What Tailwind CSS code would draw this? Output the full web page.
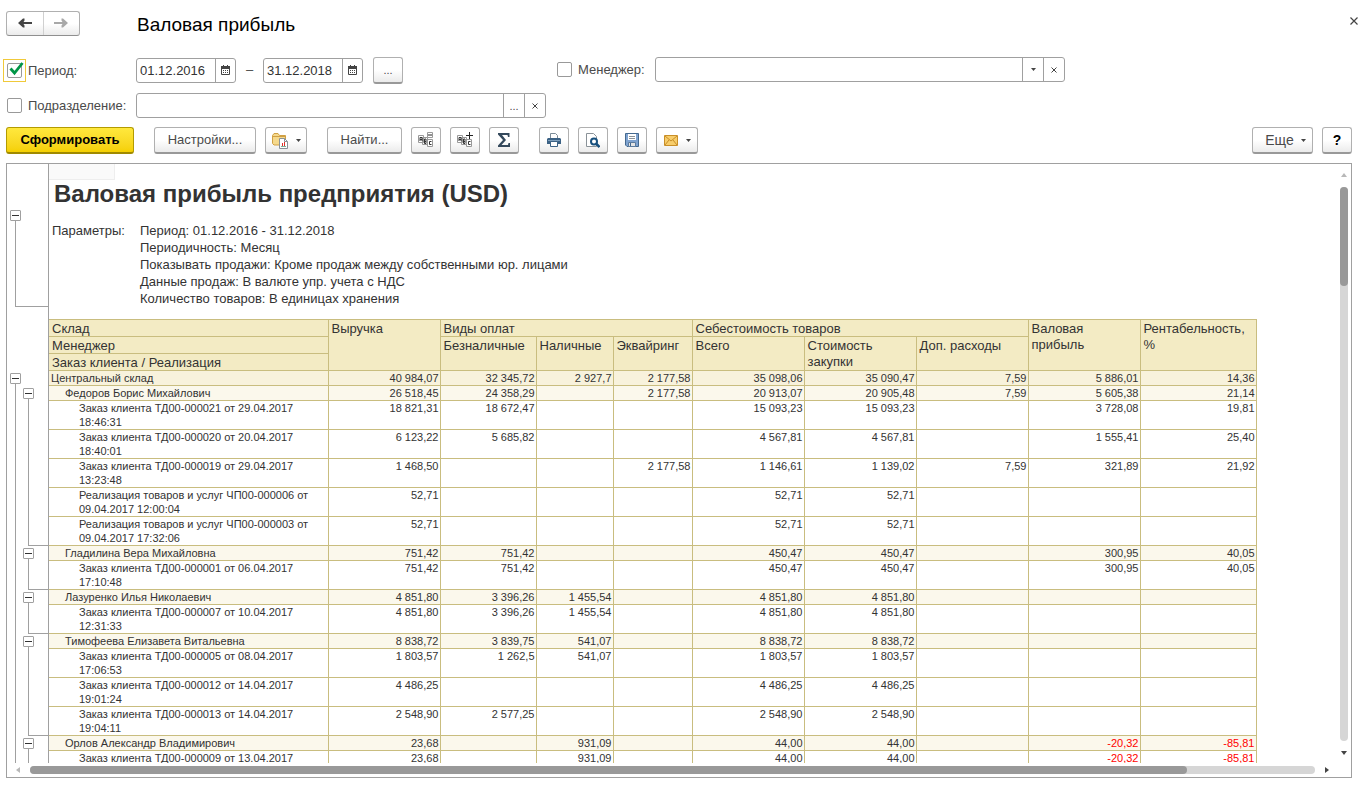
<!DOCTYPE html>
<html lang="ru">
<head>
    <meta charset="UTF-8">
    <meta name="viewport" content="width=device-width, initial-scale=1.0">
    <title>Валовая прибыль</title>
    <script src="https://cdn.jsdelivr.net/npm/@tailwindcss/browser@4"></script>
</head>
<body class="bg-white font-['Liberation_Sans',Arial,sans-serif] text-[13px] leading-4 text-[#4a4a4a] flex flex-col h-screen overflow-hidden">

<!-- Title bar -->
<header class="flex items-center h-[46px] pl-[6px] shrink-0">
    <div class="flex h-[25px] w-[74px] rounded-[3px] border border-[#b0b0b0] border-b-[#8f8f8f] bg-linear-to-b from-white from-50% to-[#ebebeb]">
        <button class="flex-1 flex items-center justify-center border-r border-[#d0d0d0]" aria-label="Назад">
            <svg width="14" height="10" viewBox="0 0 14 10"><path d="M0 5L5 .5h1.500v2L5.500 4H14v2H5.500l1 1.500v2H5z" fill="#444"/></svg>
        </button>
        <button class="flex-1 flex items-center justify-center" aria-label="Вперед">
            <svg width="14" height="10" viewBox="0 0 14 10"><path d="M14 5L9 .5H7.500v2L8.500 4H0v2h8.500l-1 1.500v2H9z" fill="#a8a8a8"/></svg>
        </button>
    </div>
    <h1 class="ml-[57px] pt-[3px] text-[19px] leading-6 text-black">Валовая прибыль</h1>
    <button class="ml-auto w-2 h-2 mb-1" aria-label="Закрыть">
        <svg width="8" height="8" viewBox="0 0 8 8" stroke="#444" stroke-width="1.200"><path d="M.5.5l7 7M7.500.5l-7 7"/></svg>
    </button>
</header>

<!-- Filters -->
<section class="grid grid-cols-[550px_1fr] gap-y-2 pl-[4px] pt-[10px] shrink-0">
    <div class="flex items-center h-7">
        <div class="flex items-center w-[132px]">
            <label class="relative flex w-[23px] h-[23px] -ml-px items-center justify-center border border-[#f0c93a]">
                <input type="checkbox" checked aria-label="Период" class="appearance-none w-[15px] h-[15px] rounded-[2px] border border-[#999] bg-white">
                <svg class="absolute left-1 top-0" width="17" height="17" viewBox="0 0 17 17" fill="none" stroke="#009646" stroke-width="2.800"><path d="M2.500 8.500l4 4.500L14.500 3"/></svg>
            </label>
            <span class="ml-[2px] pt-[2px]">Период:</span>
        </div>
        <div class="flex w-[100px] h-[25px] rounded-[3px] border border-[#a0a0a0]">
            <input type="text" value="01.12.2016" aria-label="Начало периода" class="w-[78px] pl-[3px] pt-[2px] text-[#333] outline-none">
            <button class="flex-1 flex items-center justify-center border-l border-[#a0a0a0]" aria-label="Календарь">
                <svg width="9" height="10" viewBox="0 0 9 10"><path d="M.5 2.500h8v7h-8z" fill="#fff" stroke="#444"/><path d="M0 1h9v3H0zM2 0h1v1H2zM6 0h1v1H6z" fill="#444"/><path d="M2 5.500h5M2 7.500h5" stroke="#444" stroke-dasharray="1 1"/></svg>
            </button>
        </div>
        <span class="w-[27px] text-center">–</span>
        <div class="flex w-[100px] h-[25px] rounded-[3px] border border-[#a0a0a0]">
            <input type="text" value="31.12.2018" aria-label="Конец периода" class="w-[78px] pl-[3px] pt-[2px] text-[#333] outline-none">
            <button class="flex-1 flex items-center justify-center border-l border-[#a0a0a0]" aria-label="Календарь">
                <svg width="9" height="10" viewBox="0 0 9 10"><path d="M.5 2.500h8v7h-8z" fill="#fff" stroke="#444"/><path d="M0 1h9v3H0zM2 0h1v1H2zM6 0h1v1H6z" fill="#444"/><path d="M2 5.500h5M2 7.500h5" stroke="#444" stroke-dasharray="1 1"/></svg>
            </button>
        </div>
        <button class="ml-[10px] w-[30px] h-[27px] rounded-[3px] border border-[#b0b0b0] border-b-2 border-b-[#999] bg-linear-to-b from-white from-50% to-[#ebebeb] text-[11px]">...</button>
    </div>
    <div class="flex items-center h-[27px]">
        <input id="manager-on" type="checkbox" class="appearance-none ml-[3px] w-[15px] h-[15px] rounded-[2px] border border-[#999] bg-white">
        <label for="manager-on" class="ml-[6px] w-[77px]">Менеджер:</label>
        <div class="flex w-[410px] h-[25px] rounded-[3px] border border-[#a0a0a0]">
            <input type="text" aria-label="Менеджер" class="flex-1 min-w-0 px-1 outline-none">
            <button class="w-[21px] flex items-center justify-center border-l border-[#a0a0a0]" aria-label="Выбрать"><svg width="5" height="3"><path d="M0 0h5L2.500 3z" fill="#444"/></svg></button>
            <button class="w-[21px] flex items-center justify-center border-l border-[#a0a0a0]" aria-label="Очистить"><svg width="6" height="6" stroke="#444"><path d="M.5.5l5 5M5.500.5l-5 5"/></svg></button>
        </div>
    </div>
    <div class="flex items-center h-[27px] col-span-2">
        <input id="unit-on" type="checkbox" class="appearance-none ml-[3px] w-[15px] h-[15px] rounded-[2px] border border-[#999] bg-white">
        <label for="unit-on" class="ml-[6px] w-[108px]">Подразделение:</label>
        <div class="flex w-[410px] h-[25px] rounded-[3px] border border-[#a0a0a0]">
            <input type="text" aria-label="Подразделение" class="flex-1 min-w-0 px-1 outline-none">
            <button class="w-[21px] border-l border-[#a0a0a0] text-[11px]">...</button>
            <button class="w-[21px] flex items-center justify-center border-l border-[#a0a0a0]" aria-label="Очистить"><svg width="6" height="6" stroke="#444"><path d="M.5.5l5 5M5.500.5l-5 5"/></svg></button>
        </div>
    </div>
</section>

<!-- Toolbar -->
<nav class="flex items-center px-[6px] mt-2 shrink-0 [&>button]:flex [&>button]:items-center [&>button]:justify-center [&>button]:h-[27px] [&>button]:rounded-[3px] [&>button]:border [&>button]:border-b-2">
    <button class="w-[128px] border-[#b39b00] border-b-[#a08a00] bg-linear-to-b from-[#ffe83c] to-[#f5d000] text-black font-bold">Сформировать</button>
    <button class="ml-5 w-[102px] border-[#b0b0b0] border-b-[#999] bg-linear-to-b from-white from-50% to-[#ebebeb]">Настройки...</button>
    <button class="ml-[9px] w-[42px] gap-[7px] border-[#b0b0b0] border-b-[#999] bg-linear-to-b from-white from-50% to-[#ebebeb]" aria-label="Варианты отчета">
        <svg width="17" height="17" viewBox="0 0 17 17"><path d="M.5 3.500l1.500-2h4l1.500 2h6V13H2L.5 11.500z" fill="#f5d98c" stroke="#d0a044"/><path d="M1 4.500h12" stroke="#d0a044"/><path d="M7.500 6.500h5l3 3v7h-8z" fill="#fff" stroke="#8a9298"/><path d="M12.500 6.500v3h3" fill="none" stroke="#8a9298"/><path d="M10.500 11v3M12.500 10v4" stroke="#e0302a"/><path d="M9 14.500h5" stroke="#7ab09a"/></svg>
        <svg width="5" height="3"><path d="M0 0h5L2.500 3z" fill="#444"/></svg>
    </button>
    <button class="ml-5 w-[75px] border-[#b0b0b0] border-b-[#999] bg-linear-to-b from-white from-50% to-[#ebebeb]">Найти...</button>
    <button class="ml-[9px] w-[30px] border-[#b0b0b0] border-b-[#999] bg-linear-to-b from-white from-50% to-[#ebebeb]" aria-label="Свернуть группы">
        <svg width="16" height="16" viewBox="0 0 16 16" fill="#fff" stroke="#999"><path d="M.5 3.500h5v7h-5zM4.500 5.500h5v7h-5zM9.500 7.500h5v7h-5zM9.500.5h5v5h-5z"/><path d="M2 9V5.500h2V9M2 7.500h2M6.500 7v4.500H8V7H6.500M6.500 9.500H8M13.500 9.500h-2v3h2" fill="none" stroke="#333"/><path d="M10 3h4" stroke="#222"/></svg>
    </button>
    <button class="ml-[9px] w-[30px] border-[#b0b0b0] border-b-[#999] bg-linear-to-b from-white from-50% to-[#ebebeb]" aria-label="Развернуть группы">
        <svg width="16" height="16" viewBox="0 0 16 16" fill="#fff" stroke="#999"><path d="M.5 3.500h5v7h-5zM4.500 5.500h5v7h-5zM9.500 7.500h5v7h-5z"/><path d="M2 9V5.500h2V9M2 7.500h2M6.500 7v4.500H8V7H6.500M6.500 9.500H8M13.500 9.500h-2v3h2" fill="none" stroke="#333"/><path d="M9 3.500h7M12.500 0v7" stroke="#222"/></svg>
    </button>
    <button class="ml-[9px] w-[30px] border-[#b0b0b0] border-b-[#999] bg-linear-to-b from-white from-50% to-[#ebebeb]" aria-label="Сумма">
        <svg width="12" height="14" viewBox="0 0 12 14"><path d="M0 0h11.500v4H10l-.5-2H4l4 5-4.500 5H10l.5-2H12v4H0v-1.500L5 7 0 1.500z" fill="#34495c"/></svg>
    </button>
    <button class="ml-5 w-[30px] border-[#b0b0b0] border-b-[#999] bg-linear-to-b from-white from-50% to-[#ebebeb]" aria-label="Печать">
        <svg width="14" height="14" viewBox="0 0 14 14"><path d="M3.500 5V.5h5l2 2V5" fill="#fff" stroke="#7d8c98"/><path d="M1 5h12l1 1v5H0V6z" fill="#3c6285"/><path d="M1 7.500h12" stroke="#7f9fbc"/><path d="M3.500 8.500h7v5h-7z" fill="#fff" stroke="#3c6285"/></svg>
    </button>
    <button class="ml-[9px] w-[30px] border-[#b0b0b0] border-b-[#999] bg-linear-to-b from-white from-50% to-[#ebebeb]" aria-label="Предварительный просмотр">
        <svg width="14" height="15" viewBox="0 0 14 15"><path d="M.5.5h7l3 3v10H.5z" fill="#fff" stroke="#8a9298"/><circle cx="8" cy="8.500" r="3" fill="#fff" stroke="#17507e" stroke-width="2"/><path d="M10 10.500l3.500 3.500" stroke="#17507e" stroke-width="2.500"/></svg>
    </button>
    <button class="ml-[9px] w-[30px] border-[#b0b0b0] border-b-[#999] bg-linear-to-b from-white from-50% to-[#ebebeb]" aria-label="Сохранить">
        <svg width="14" height="14" viewBox="0 0 14 14"><path d="M.5.5h13v13H2L.5 12z" fill="#7fa3d0" stroke="#44698f"/><path d="M3 1h8v6H3z" fill="#fff"/><path d="M4 3.500h6M4 5.500h6" stroke="#8a9298"/><path d="M3.500 9.500h7v4h-7z" fill="#e4e4e4" stroke="#5d7c9e"/><path d="M5.500 10v3" stroke="#44698f"/></svg>
    </button>
    <button class="ml-[9px] w-[42px] gap-2 border-[#b0b0b0] border-b-[#999] bg-linear-to-b from-white from-50% to-[#ebebeb]" aria-label="Отправить">
        <svg width="14" height="11" viewBox="0 0 14 11"><path d="M.5.5h13v10H.5z" fill="#f7cd6b" stroke="#c98f28"/><path d="M1 1l6 5 6-5M1 10l4-5M13 10L9 5" fill="none" stroke="#c98f28"/></svg>
        <svg width="5" height="3"><path d="M0 0h5L2.500 3z" fill="#444"/></svg>
    </button>
    <button class="ml-auto w-[61px] gap-[7px] pl-[6px] border-[#b0b0b0] border-b-[#999] bg-linear-to-b from-white from-50% to-[#ebebeb] text-[14px]">Еще
        <svg width="5" height="3"><path d="M0 0h5L2.500 3z" fill="#444"/></svg>
    </button>
    <button class="ml-[9px] w-[30px] border-[#b0b0b0] border-b-[#999] bg-linear-to-b from-white from-50% to-[#ebebeb] text-black font-bold text-[14px]">?</button>
</nav>

<!-- Report -->
<main class="flex-1 min-h-0 mt-[9px] ml-[6px] mr-[6px] mb-[11px] border border-[#a0a0a0] flex flex-col text-[#333]">
    <div class="flex-1 min-h-0 flex">
        <!-- Group outline -->
        <div id="outline" class="w-[42px] shrink-0 border-r border-[#a0a0a0] overflow-hidden pl-[3px]">
            <div class="pt-[46px] h-[143px] flex flex-col">
                <button class="w-[11px] h-[11px] shrink-0 rounded-[1px] border border-[#a0a0a0] flex items-center justify-center" aria-label="Свернуть"><span class="w-[7px] h-px bg-[#333]"></span></button>
                <div class="flex-1 ml-[5px] border-l border-b border-[#a0a0a0]"></div>
            </div>
            <button class="mt-[66px] w-[11px] h-[11px] rounded-[1px] border border-[#a0a0a0] flex items-center justify-center" aria-label="Свернуть"><span class="w-[7px] h-px bg-[#333]"></span></button>
            <div id="groups" class="ml-[5px] pl-[7px] pt-[2px] border-l border-[#a0a0a0]"></div>
        </div>

        <div class="flex-1 min-w-0 overflow-hidden">
            <div class="w-[66px] h-4 bg-[#fafafa] border-r border-b border-[#eee]"></div>
            <h2 class="pl-[5px] text-[24px] leading-7 font-bold">Валовая прибыль предприятия (USD)</h2>
            <dl class="mt-[14px] grid grid-cols-[88px_1fr] pl-[3px] leading-[17px]">
                <dt>Параметры:</dt>
                <dd>Период: 01.12.2016 - 31.12.2018<br>Периодичность: Месяц<br>Показывать продажи: Кроме продаж между собственными юр. лицами<br>Данные продаж: В валюте упр. учета с НДС<br>Количество товаров: В единицах хранения</dd>
            </dl>
            <table class="mt-3 table-fixed w-[1207px] border-collapse text-[11px] leading-[14px] [&_th]:border [&_td]:border [&_th]:border-[#c9bd7f] [&_td]:border-[#c9bd7f] [&_th]:border-l-0 [&_td]:border-l-0 [&_th]:p-0 [&_th]:pt-px [&_th]:pl-[3px] [&_th]:font-normal [&_th]:text-left [&_th]:align-top [&_td]:align-top">
                <colgroup>
                    <col class="w-[279px]"><col class="w-[112px]"><col class="w-[96px]"><col class="w-[77px]"><col class="w-[79px]"><col class="w-[112px]"><col class="w-[112px]"><col class="w-[112px]"><col class="w-[112px]"><col class="w-[116px]">
                </colgroup>
                <thead class="bg-[#f3ebc4] text-[13px] leading-[15px]">
                    <tr class="h-[17px]">
                        <th>Склад</th>
                        <th rowspan="3">Выручка</th>
                        <th colspan="3">Виды оплат</th>
                        <th colspan="3">Себестоимость товаров</th>
                        <th rowspan="3" class="leading-4">Валовая<br>прибыль</th>
                        <th rowspan="3" class="leading-4">Рентабельность,<br>%</th>
                    </tr>
                    <tr class="h-[17px]">
                        <th>Менеджер</th>
                        <th rowspan="2">Безналичные</th>
                        <th rowspan="2">Наличные</th>
                        <th rowspan="2">Эквайринг</th>
                        <th rowspan="2">Всего</th>
                        <th rowspan="2" class="leading-4">Стоимость<br>закупки</th>
                        <th rowspan="2">Доп. расходы</th>
                    </tr>
                    <tr class="h-[17px]">
                        <th>Заказ клиента / Реализация</th>
                    </tr>
                </thead>
                <tbody id="rows"></tbody>
            </table>
        </div>

        <!-- Vertical scrollbar -->
        <div class="w-[15px] shrink-0 flex flex-col items-center pt-[9px] pb-[8px]">
            <svg width="6" height="4"><path d="M0 4h6L3 0z" fill="#b8b8b8"/></svg>
            <div class="flex-1 w-2 mt-[10px] mb-[10px] rounded-full bg-[#d6d6d6]"><div class="h-[99px] rounded-full bg-[#999]"></div></div>
            <svg width="6" height="4"><path d="M0 0h6L3 4z" fill="#444"/></svg>
        </div>
    </div>

    <!-- Horizontal scrollbar -->
    <div class="h-[14px] shrink-0 flex items-center pl-[9px] pr-[22px]">
        <svg width="4" height="6"><path d="M4 0v6L0 3z" fill="#b8b8b8"/></svg>
        <div class="flex-1 h-2 mx-[10px] rounded-full bg-[#d6d6d6]"><div class="w-[90%] h-2 rounded-full bg-[#999]"></div></div>
        <svg width="4" height="6"><path d="M0 0v6l4-3z" fill="#444"/></svg>
    </div>
</main>

<script>
    // level, title, then one value per column
    const rows = [
        [0, 'Центральный склад', '40 984,07', '32 345,72', '2 927,7', '2 177,58', '35 098,06', '35 090,47', '7,59', '5 886,01', '14,36'],
        [1, 'Федоров Борис Михайлович', '26 518,45', '24 358,29', '', '2 177,58', '20 913,07', '20 905,48', '7,59', '5 605,38', '21,14'],
        [2, 'Заказ клиента ТД00-000021 от 29.04.2017<br>18:46:31', '18 821,31', '18 672,47', '', '', '15 093,23', '15 093,23', '', '3 728,08', '19,81'],
        [2, 'Заказ клиента ТД00-000020 от 20.04.2017<br>18:40:01', '6 123,22', '5 685,82', '', '', '4 567,81', '4 567,81', '', '1 555,41', '25,40'],
        [2, 'Заказ клиента ТД00-000019 от 29.04.2017<br>13:23:48', '1 468,50', '', '', '2 177,58', '1 146,61', '1 139,02', '7,59', '321,89', '21,92'],
        [2, 'Реализация товаров и услуг ЧП00-000006 от<br>09.04.2017 12:00:04', '52,71', '', '', '', '52,71', '52,71', '', '', ''],
        [2, 'Реализация товаров и услуг ЧП00-000003 от<br>09.04.2017 17:32:06', '52,71', '', '', '', '52,71', '52,71', '', '', ''],
        [1, 'Гладилина Вера Михайловна', '751,42', '751,42', '', '', '450,47', '450,47', '', '300,95', '40,05'],
        [2, 'Заказ клиента ТД00-000001 от 06.04.2017<br>17:10:48', '751,42', '751,42', '', '', '450,47', '450,47', '', '300,95', '40,05'],
        [1, 'Лазуренко Илья Николаевич', '4 851,80', '3 396,26', '1 455,54', '', '4 851,80', '4 851,80', '', '', ''],
        [2, 'Заказ клиента ТД00-000007 от 10.04.2017<br>12:31:33', '4 851,80', '3 396,26', '1 455,54', '', '4 851,80', '4 851,80', '', '', ''],
        [1, 'Тимофеева Елизавета Витальевна', '8 838,72', '3 839,75', '541,07', '', '8 838,72', '8 838,72', '', '', ''],
        [2, 'Заказ клиента ТД00-000005 от 08.04.2017<br>17:06:53', '1 803,57', '1 262,5', '541,07', '', '1 803,57', '1 803,57', '', '', ''],
        [2, 'Заказ клиента ТД00-000012 от 14.04.2017<br>19:01:24', '4 486,25', '', '', '', '4 486,25', '4 486,25', '', '', ''],
        [2, 'Заказ клиента ТД00-000013 от 14.04.2017<br>19:04:11', '2 548,90', '2 577,25', '', '', '2 548,90', '2 548,90', '', '', ''],
        [1, 'Орлов Александр Владимирович', '23,68', '', '931,09', '', '44,00', '44,00', '', '-20,32', '-85,81'],
        [2, 'Заказ клиента ТД00-000009 от 13.04.2017', '23,68', '', '931,09', '', '44,00', '44,00', '', '-20,32', '-85,81'],
    ];
    const rowClass = ['h-[15px] bg-[#f8f2dc]', 'h-[15px] bg-[#fbf8ec]', 'h-[29px]'];
    const titleClass = ['pl-[2px]', 'pl-4', 'pl-[30px]'];

    document.getElementById('rows').innerHTML = rows.map(([level, title, ...values]) => `
        <tr class="${rowClass[level]}">
            <td class="${titleClass[level]}">${title}</td>
            ${values.map(v => `<td class="pr-px text-right ${v[0] === '-' ? 'text-[#f00]' : ''}">${v}</td>`).join('')}
        </tr>`).join('');

    // one bracket per manager, as tall as its rows
    const heights = [];
    rows.forEach(([level]) => {
        if (level === 1) heights.push(15);
        if (level === 2) heights[heights.length - 1] += 29;
    });
    document.getElementById('groups').innerHTML = heights.map(h => `
        <div class="flex flex-col pt-[2px]" style="height: ${h}px">
            <button class="w-[11px] h-[11px] shrink-0 rounded-[1px] border border-[#a0a0a0] flex items-center justify-center" aria-label="Свернуть"><span class="w-[7px] h-px bg-[#333]"></span></button>
            <div class="flex-1 ml-[5px] border-l border-b border-[#a0a0a0]"></div>
        </div>`).join('');
</script>
</body>
</html>
